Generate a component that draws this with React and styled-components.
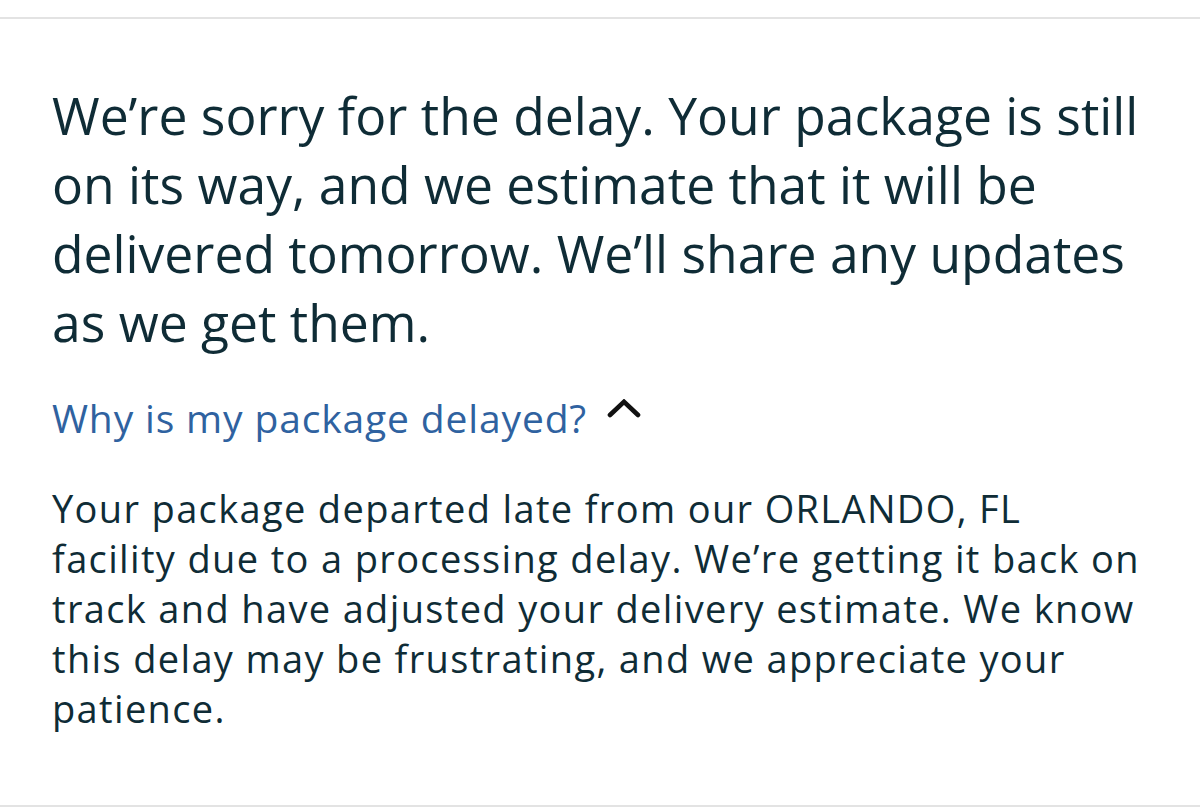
import React from 'react';
import styled, { createGlobalStyle } from 'styled-components';

const GlobalStyle = createGlobalStyle`
  html, body {
    margin: 0;
    padding: 0;
    background: #ffffff;
  }
  body {
    font-family: "Open Sans", "Noto Sans", sans-serif;
    color: #0f2c36;
  }
`;

const TEXT_COLOR = '#0f2c36';
const LINK_COLOR = '#2f62a0';

const Card = styled.section`
  width: 1200px;
  box-sizing: border-box;
  border-top: 2px solid #e3e3e3;
  border-bottom: 2px solid #e3e3e3;
  margin-top: 17px;
  height: 790px;
  padding: 62px 52px 0;
`;

const Headline = styled.h1`
  margin: 0;
  font-size: 51.6px;
  font-weight: 400;
  line-height: 69px;
  color: ${ TEXT_COLOR };
`;

const Toggle = styled.button`
  display: flex;
  align-items: flex-start;
  gap: 20px;
  margin: 37px 0 0;
  padding: 0;
  border: 0;
  background: none;
  font-family: inherit;
  font-size: 39px;
  letter-spacing: 0.85px;
  line-height: 48px;
  color: ${ LINK_COLOR };
  cursor: pointer;
`;

const Chevron = styled.svg`
  width: 34px;
  height: 19px;
  margin-top: 5px;
  flex-shrink: 0;
`;

const Reason = styled.p`
  margin: 41px 0 0;
  font-size: 38px;
  letter-spacing: 1.35px;
  line-height: 50px;
  color: ${ TEXT_COLOR };
`;

const App = () => (
  <>
    <GlobalStyle />
    <Card>
      <Headline>
        We’re sorry for the delay. Your package is still<br />
        on its way, and we estimate that it will be<br />
        delivered tomorrow. We’ll share any updates<br />
        as we get them.
      </Headline>
      <Toggle type="button">
        Why is my package delayed?
        <Chevron viewBox="0 0 34 19">
          <path d="M3 16 L17 2.8 L31 16" fill="none" stroke="#111" strokeWidth="4.6" strokeLinecap="round" strokeLinejoin="miter" />
        </Chevron>
      </Toggle>
      <Reason>
        Your package departed late from our ORLANDO, FL<br />
        facility due to a processing delay. We’re getting it back on<br />
        track and have adjusted your delivery estimate. We know<br />
        this delay may be frustrating, and we appreciate your<br />
        patience.
      </Reason>
    </Card>
  </>
);

export default App;
